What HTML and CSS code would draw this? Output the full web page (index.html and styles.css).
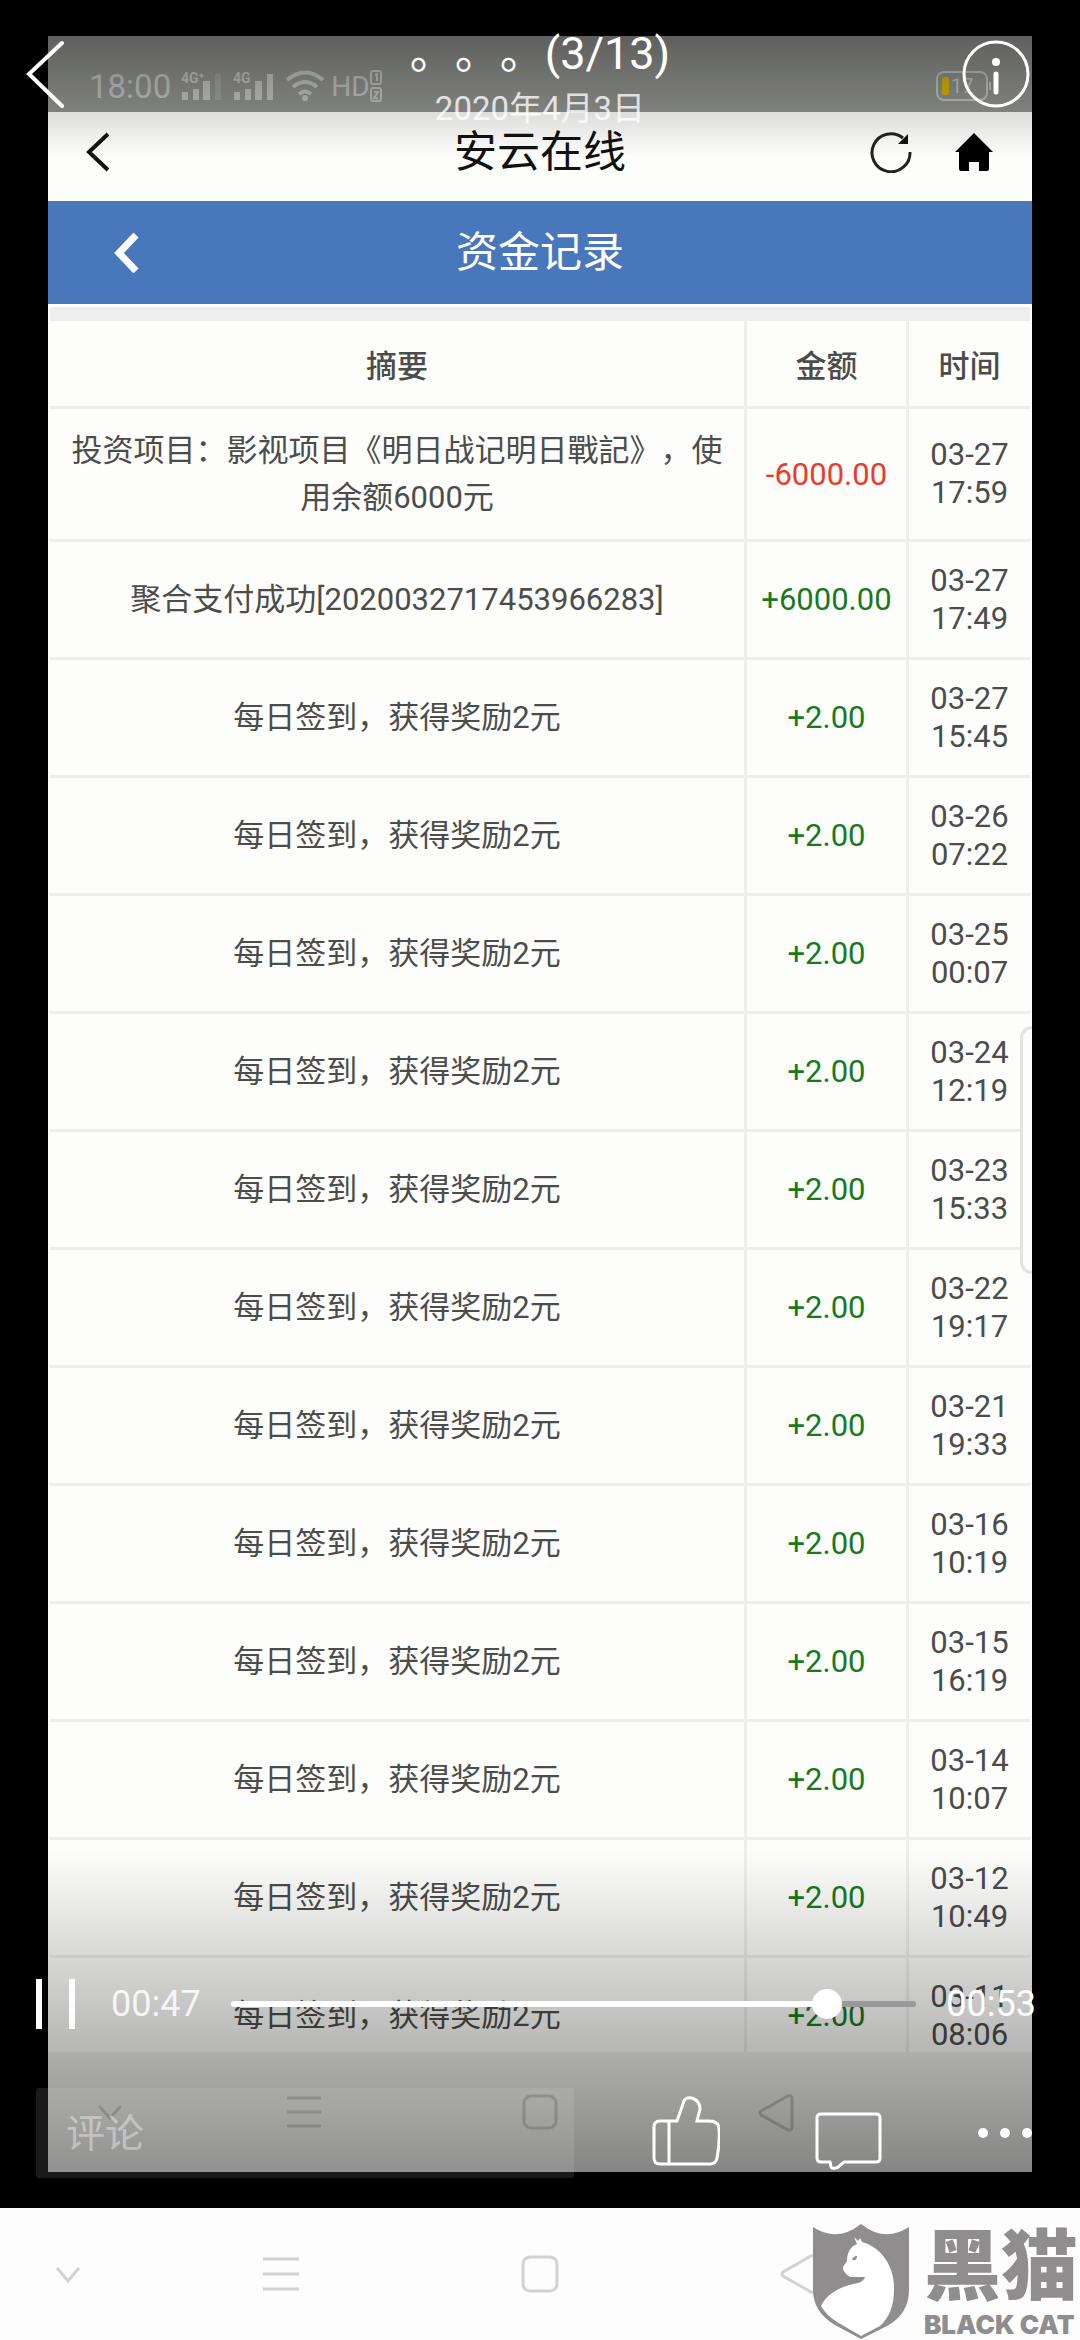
FILE: index.html
```html
<!DOCTYPE html>
<html lang="zh-CN">
<head>
  <meta charset="UTF-8" />
  <meta name="viewport" content="width=device-width, initial-scale=1.0" />
  <title>资金记录</title>
  <link rel="stylesheet" href="styles.css">
</head>
<body>
  <main class="viewer">

    <!-- recorded phone screen -->
    <section class="video">
      <div class="status-bar">
        <span>18:00</span>
        <svg class="sig" width="42" height="30" viewBox="0 0 42 30">
          <text x="0" y="12">4G⁺</text>
          <path d="M1 21h6v8H1zM12 18h6v11h-6zM22 10h7v19h-7z" />
          <path d="M34 3h6v26h-6z" opacity=".3" />
        </svg>
        <svg class="sig" width="42" height="30" viewBox="0 0 42 30">
          <text x="0" y="12">4G</text>
          <path d="M1 21h6v8H1zM12 18h6v11h-6zM22 10h7v19h-7zM34 3h6v26h-6z" />
        </svg>
        <svg class="wifi" width="40" height="32" viewBox="0 0 40 32">
          <path d="M2 10q18-15 36 0M8 17q12-10 24 0M14 24q6-5 12 0" />
          <circle cx="20" cy="28" r="3" />
        </svg>
        <span class="hd">HD</span>
        <svg class="sims" width="12" height="32" viewBox="0 0 12 32">
          <rect x="1" y="1" width="10" height="13" rx="2" />
          <rect x="1" y="18" width="10" height="13" rx="2" />
          <path d="M5 5l2-1v7M4 22h4l-4 6h4" />
        </svg>
        <svg class="battery" width="56" height="30" viewBox="0 0 56 30">
          <rect x="1" y="1" width="50" height="28" rx="7" />
          <path d="M54 11v8" />
          <rect class="level" x="6" y="6" width="7" height="18" rx="2" />
          <text x="15" y="22">17</text>
        </svg>
      </div>

      <div class="app-bar">
        <button class="icon-btn" aria-label="返回">
          <svg width="24" height="40" viewBox="0 0 24 40"><path d="M22 2L3 20l19 18" fill="none" stroke="#111" stroke-width="4" /></svg>
        </button>
        <h1>安云在线</h1>
        <div class="app-actions">
          <button class="icon-btn" aria-label="刷新">
            <svg width="42" height="42" viewBox="0 0 42 42">
              <path d="M33 7A19 19 0 1 0 40 21" fill="none" stroke="#222" stroke-width="3" />
              <path d="M38 3v10H28z" fill="#111" />
            </svg>
          </button>
          <button class="icon-btn" aria-label="首页">
            <svg width="40" height="40" viewBox="0 0 40 40"><path d="M20 1L1 20h4v17q0 2 2 2h8V30h10v9h8q2 0 2-2V20h4z" fill="#000" /></svg>
          </button>
        </div>
      </div>

      <div class="page-bar">
        <button class="icon-btn" aria-label="返回">
          <svg width="26" height="40" viewBox="0 0 26 40"><path d="M22 2L5 20l17 18" fill="none" stroke="#fff" stroke-width="7" /></svg>
        </button>
        <h2>资金记录</h2>
      </div>

      <div class="records">
        <table>
          <thead>
            <tr><th>摘要</th><th class="col-amount">金额</th><th class="col-time">时间</th></tr>
          </thead>
          <tbody>
            <tr><td>投资项目：影视项目《明日战记明日戰記》，使用余额6000元</td><td class="minus">-6000.00</td><td class="time">03-27<br>17:59</td></tr>
            <tr><td>聚合支付成功[2020032717453966283]</td><td class="plus">+6000.00</td><td class="time">03-27<br>17:49</td></tr>
            <tr><td>每日签到，获得奖励2元</td><td class="plus">+2.00</td><td class="time">03-27<br>15:45</td></tr>
            <tr><td>每日签到，获得奖励2元</td><td class="plus">+2.00</td><td class="time">03-26<br>07:22</td></tr>
            <tr><td>每日签到，获得奖励2元</td><td class="plus">+2.00</td><td class="time">03-25<br>00:07</td></tr>
            <tr><td>每日签到，获得奖励2元</td><td class="plus">+2.00</td><td class="time">03-24<br>12:19</td></tr>
            <tr><td>每日签到，获得奖励2元</td><td class="plus">+2.00</td><td class="time">03-23<br>15:33</td></tr>
            <tr><td>每日签到，获得奖励2元</td><td class="plus">+2.00</td><td class="time">03-22<br>19:17</td></tr>
            <tr><td>每日签到，获得奖励2元</td><td class="plus">+2.00</td><td class="time">03-21<br>19:33</td></tr>
            <tr><td>每日签到，获得奖励2元</td><td class="plus">+2.00</td><td class="time">03-16<br>10:19</td></tr>
            <tr><td>每日签到，获得奖励2元</td><td class="plus">+2.00</td><td class="time">03-15<br>16:19</td></tr>
            <tr><td>每日签到，获得奖励2元</td><td class="plus">+2.00</td><td class="time">03-14<br>10:07</td></tr>
            <tr><td>每日签到，获得奖励2元</td><td class="plus">+2.00</td><td class="time">03-12<br>10:49</td></tr>
            <tr><td>每日签到，获得奖励2元</td><td class="plus">+2.00</td><td class="time">03-11<br>08:06</td></tr>
          </tbody>
        </table>
        <div class="edge-handle"></div>
      </div>

      <div class="soft-keys">
        <svg width="24" height="36" viewBox="0 0 24 36"><path d="M1 12l11 12 11-12" /></svg>
        <svg width="36" height="36" viewBox="0 0 36 36"><path d="M1 4h34M1 18h34M1 32h34" /></svg>
        <svg width="36" height="36" viewBox="0 0 36 36"><rect x="2" y="2" width="32" height="32" rx="7" /></svg>
        <svg width="36" height="38" viewBox="0 0 36 38"><path d="M3 17L30 2q4-1 4 3v28q0 4-4 3L3 21q-2-2 0-4z" /></svg>
      </div>
    </section>

    <!-- player controls over the video -->
    <header class="top-bar">
      <button class="icon-btn" aria-label="返回">
        <svg width="40" height="68" viewBox="0 0 40 68"><path d="M36 3L3 34l33 32" fill="none" stroke="#fff" stroke-width="4" stroke-linecap="round" /></svg>
      </button>
      <div class="caption">
        <div class="name">。。。(3/13)</div>
        <div class="date">2020年4月3日</div>
      </div>
      <button class="icon-btn info" aria-label="信息">
        <svg width="68" height="68" viewBox="0 0 68 68" fill="none" stroke="#fff">
          <circle cx="34" cy="34" r="32" stroke-width="3" />
          <circle cx="34" cy="22" r="4" fill="#fff" stroke="none" />
          <path d="M34 34v18" stroke-width="5" stroke-linecap="round" />
        </svg>
      </button>
    </header>

    <footer class="bottom-bar">
      <div class="progress">
        <button class="pause" aria-label="暂停"></button>
        <span class="now">00:47</span>
        <input type="range" class="seek" min="0" max="53" value="47" aria-label="播放进度" />
        <span>00:53</span>
      </div>
      <div class="actions">
        <input type="text" class="comment" placeholder="评论" aria-label="评论" />
        <div class="buttons">
          <button class="icon-btn" aria-label="点赞">
            <svg width="68" height="76" viewBox="0 0 68 76">
              <path d="M2 32q0-6 6-6h17l7-20q2-4 8-3 8 3 8 11l-3 12h12q10 0 10 8c1 12 0 18-2 29q-1 6-7 6H8q-6 0-6-6zM17 26v43" />
            </svg>
          </button>
          <button class="icon-btn" aria-label="查看评论">
            <svg width="68" height="76" viewBox="0 0 68 76">
              <path d="M6 19h55q4 0 4 4v40q0 4-4 4H29c-5 4-6 7-12 6-2-1-1-4-2-6H6q-4 0-4-4V23q0-4 4-4z" />
            </svg>
          </button>
          <button class="icon-btn" aria-label="更多">
            <svg class="dots" width="54" height="76" viewBox="0 0 54 76">
              <circle cx="5" cy="38" r="5" /><circle cx="27" cy="38" r="5" /><circle cx="49" cy="38" r="5" />
            </svg>
          </button>
        </div>
      </div>
    </footer>
  </main>

  <nav class="system-keys">
    <button class="icon-btn" aria-label="收起"><svg width="24" height="38" viewBox="0 0 24 38"><path d="M1 13l11 13 11-13" /></svg></button>
    <button class="icon-btn" aria-label="菜单"><svg width="36" height="38" viewBox="0 0 36 38"><path d="M0 4h36M0 19h36M0 34h36" /></svg></button>
    <button class="icon-btn" aria-label="主屏幕"><svg width="38" height="38" viewBox="0 0 38 38"><rect x="2" y="2" width="34" height="34" rx="7" /></svg></button>
    <button class="icon-btn" aria-label="后退"><svg width="38" height="40" viewBox="0 0 38 40"><path d="M3 18L31 2q5-1 5 3v30q0 4-5 3L3 22q-2-2 0-4z" /></svg></button>
  </nav>

  <!-- watermark -->
  <div class="watermark">
    <svg width="98" height="116" viewBox="0 0 98 116">
      <path d="M1 3q24 16 48-3 24 19 48 3v63q0 24-22 36L49 115 23 101Q1 88 1 66z" fill="#8f8d8e" />
      <path d="M42 13l4 4 2-3 2 4C72 24 83 46 82 66c0 16-5 28-14 36L49 112 25 98Q14 91 9 82c7-14 21-20 37-23q6-2 7-6H38q-8-5-7-10l4-6c0-9 4-15 10-17z" fill="#fff" />
      <path d="M40 36q1-4 5-4 0 5-5 4z" fill="#8f8d8e" />
    </svg>
    <div class="brand">
      <span class="brand-cn">黑猫</span>
      <span class="brand-en">BLACK CAT</span>
    </div>
  </div>
</body>
</html>
```

FILE: styles.css
```css
* {
  box-sizing: border-box;
}
body {
  margin: 0;
  height: 100vh;
  display: flex;
  flex-direction: column;
  background: #000;
  font-family: Roboto, 'Noto Sans CJK SC', sans-serif;
  text-spacing-trim: space-all;
}
.icon-btn {
  padding: 0;
  border: none;
  background: none;
  display: flex;
}
svg {
  display: block;
}

/* video area */
.viewer {
  position: relative;
  flex: 1;
  min-height: 0;
  display: flex;
  padding: 36px 48px;
}
.video {
  flex: 1;
  display: flex;
  flex-direction: column;
  background: #fdfefc;
}
.status-bar {
  height: 76px;
  padding: 24px 40px 0 41px;
  display: flex;
  align-items: center;
  gap: 10px;
  background: #929491;
  color: #c4c6c3;
  font-size: 33px;
}
.sig, .battery {
  fill: #c4c6c3;
}
.sig text {
  font-size: 14px;
  font-weight: bold;
}
.wifi {
  fill: #c4c6c3;
  margin-right: -4px;
}
.wifi path {
  fill: none;
  stroke: #c4c6c3;
  stroke-width: 4;
}
.hd {
  font-size: 28px;
}
.sims {
  fill: none;
  stroke: #c4c6c3;
  stroke-width: 2;
  margin-left: -10px;
}
.battery {
  margin-left: auto;
  stroke: #c4c6c3;
  stroke-width: 2;
}
.battery rect {
  fill: none;
}
.battery .level {
  fill: #ddb800;
  stroke: none;
}
.battery text {
  font-size: 20px;
  stroke: none;
}
.app-bar, .page-bar {
  display: grid;
  grid-template-columns: 1fr auto 1fr;
  align-items: center;
}
.app-bar {
  height: 89px;
  padding: 0 38px 10px;
}
.app-bar h1, .page-bar h2 {
  margin: 0;
  font-weight: 400;
  line-height: 60px;
}
.app-bar h1 {
  font-size: 43px;
  color: #111;
}
.app-actions {
  justify-self: end;
  display: flex;
  align-items: center;
  gap: 42px;
}
.page-bar {
  height: 103px;
  padding: 0 66px;
  background: #4877bc;
  color: #fff;
}
.page-bar h2 {
  font-size: 42px;
}

/* records table */
.records {
  position: relative;
  flex: 1;
  min-height: 0;
  overflow: hidden;
  padding: 0 2px;
}
.records::before {
  content: "";
  display: block;
  height: 14px;
  background: #eeefed;
  border-top: 3px solid #fff;
}
table {
  width: 100%;
  border-spacing: 0;
  table-layout: fixed;
  font-size: 31px;
  color: #4c4d4b;
  text-align: center;
}
th, td {
  border-right: 3px solid #eeefed;
  border-bottom: 3px solid #eeefed;
}
th:last-child, td:last-child {
  border-right: none;
}
th {
  height: 88px;
  padding: 0;
  font-weight: 500;
}
td {
  height: 118px;
  padding: 18px 10px;
  line-height: 47px;
}
.col-amount {
  width: 162px;
}
.col-time {
  width: 121px;
}
.minus, .plus, .time {
  padding: 0;
}
.minus {
  color: #ee3a28;
}
.plus {
  color: #187a1e;
}
.time {
  line-height: 38px;
}
.edge-handle {
  position: absolute;
  top: 722px;
  right: 0;
  width: 12px;
  height: 248px;
  border: 3px solid #e3e4e2;
  border-right: none;
  border-radius: 12px 0 0 12px;
  background: #fdfefc;
}
.soft-keys, .system-keys {
  display: grid;
  grid-template-columns: 14% 24% 24% 24%;
  justify-items: center;
}
.soft-keys svg, .system-keys svg {
  fill: none;
  stroke: #d2d2d2;
  stroke-width: 3;
}
.soft-keys {
  height: 120px;
  padding-top: 42px;
  background: #f2f4f1;
}
.soft-keys svg {
  stroke: #c6c8c5;
}
.soft-keys svg:first-child {
  justify-self: start;
  margin-left: 50px;
}
.system-keys button:first-child {
  justify-self: start;
  margin-left: 56px;
}

/* overlays */
.top-bar {
  position: absolute;
  top: 0;
  left: 0;
  right: 0;
  height: 157px;
  padding: 0 26px;
  display: grid;
  grid-template-columns: 1fr auto 1fr;
  background: linear-gradient(rgba(0, 0, 0, 0.45), rgba(0, 0, 0, 0));
  color: #fff;
}
.top-bar .icon-btn {
  align-self: start;
  margin-top: 40px;
}
.top-bar .info {
  justify-self: end;
  margin-right: 24px;
}
.caption {
  padding-top: 25px;
  text-align: center;
}
.name {
  font-size: 45px;
  line-height: 58px;
}
.date {
  font-size: 33px;
  line-height: 52px;
  color: rgba(255, 255, 255, 0.8);
}
.bottom-bar {
  position: absolute;
  left: 0;
  right: 0;
  bottom: 0;
  padding: 129px 44px 30px 36px;
  display: flex;
  flex-direction: column;
  gap: 59px;
  background: linear-gradient(rgba(0, 0, 0, 0), rgba(0, 0, 0, 0.5));
  color: #fff;
}
.progress {
  height: 50px;
  display: flex;
  align-items: center;
  font-size: 36px;
}
.pause {
  width: 39px;
  height: 50px;
  padding: 0;
  background: none;
  border: solid #fff;
  border-width: 0 6px;
}
.now {
  margin-left: 36px;
  color: rgba(255, 255, 255, 0.85);
}
.seek {
  flex: 1;
  min-width: 0;
  height: 30px;
  margin: 0 30px;
  appearance: none;
  background: none;
}
.seek::-webkit-slider-runnable-track {
  height: 6px;
  border-radius: 3px;
  background: linear-gradient(to right, #fff 88%, #989898 88%);
}
.seek::-webkit-slider-thumb {
  appearance: none;
  width: 30px;
  height: 30px;
  margin-top: -12px;
  border-radius: 50%;
  background: #fff;
}
.actions {
  display: flex;
  margin-right: 4px;
}
.comment {
  width: 54%;
  height: 90px;
  padding: 2px 30px 0;
  border: none;
  border-radius: 3px;
  background: rgba(255, 255, 255, 0.1);
  color: #fff;
  font-family: inherit;
  font-size: 39px;
}
.comment::placeholder {
  color: rgba(255, 255, 255, 0.4);
}
.buttons {
  flex: 1;
  display: flex;
  align-items: center;
  justify-content: space-between;
  padding-left: 78px;
}
.buttons svg {
  fill: none;
  stroke: #fff;
  stroke-width: 3;
}
.buttons .dots {
  fill: #fff;
  stroke: none;
}

/* system navigation */
.system-keys {
  height: 132px;
  align-items: center;
  background: #fdfdfd;
}
.watermark {
  position: absolute;
  right: 2px;
  bottom: 0;
  display: flex;
  gap: 14px;
  color: #8f8d8e;
}
.brand {
  display: flex;
  flex-direction: column;
}
.brand-cn {
  font-size: 77px;
  font-weight: 900;
  line-height: 88px;
}
.brand-en {
  font-family: Inter, sans-serif;
  font-size: 26px;
  font-weight: 900;
  line-height: 26px;
}
```
